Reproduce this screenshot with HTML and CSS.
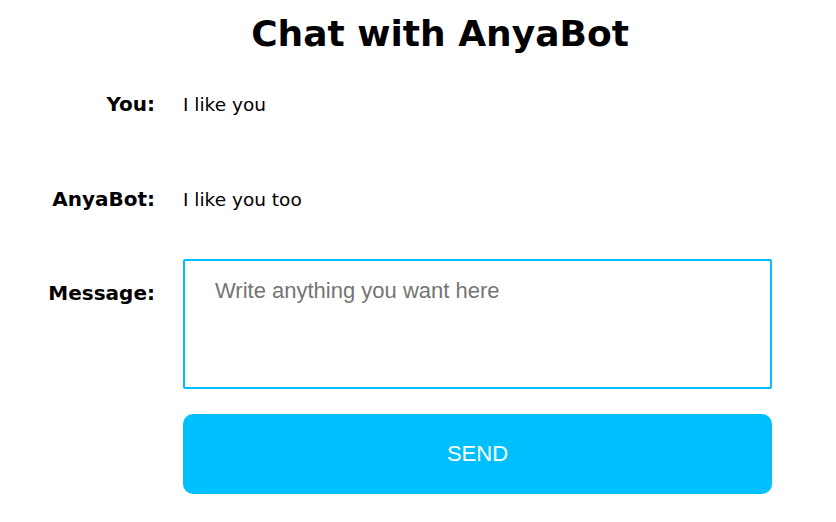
FILE: index.html
```html
<!DOCTYPE html>
<html lang="en">
<head>
<meta charset="utf-8">
<title>Chat with AnyaBot</title>
<link rel="stylesheet" href="styles.css">
</head>
<body>
<main class="page">
  <h1 class="title">Chat with AnyaBot</h1>
  <div class="row row-you">
    <span class="label">You:</span>
    <span class="text">I like you</span>
  </div>
  <div class="row row-bot">
    <span class="label">AnyaBot:</span>
    <span class="text">I like you too</span>
  </div>
  <div class="row row-msg">
    <label class="label label-msg" for="msg">Message:</label>
    <textarea id="msg" class="input" placeholder="Write anything you want here"></textarea>
  </div>
  <div class="row row-send">
    <span></span>
    <button class="send" type="button">SEND</button>
  </div>
</main>
</body>
</html>
```
FILE: styles.css
```css
html, body {
  margin: 0;
  padding: 0;
  background: #ffffff;
}

.page {
  width: 836px;
  font-family: "DejaVu Sans", sans-serif;
  color: #000;
}

.title {
  margin: 0 0 0 44px;
  padding-top: 12px;
  font-size: 36px;
  line-height: 44px;
  font-weight: bold;
  text-align: center;
}

.row {
  display: grid;
  grid-template-columns: 155px 589px;
  column-gap: 28px;
  align-items: baseline;
}

.label {
  font-size: 20px;
  line-height: 24px;
  font-weight: bold;
  text-align: right;
}

.text {
  font-size: 18.5px;
  line-height: 24px;
}

.row-you { margin-top: 36px; }
.row-bot { margin-top: 70px; }

.row-msg {
  margin-top: 47px;
  align-items: start;
}

.label-msg {
  padding-top: 22px;
}

.input {
  box-sizing: border-box;
  width: 589px;
  height: 130px;
  margin: 0;
  padding: 17px 30px;
  border: 2px solid #00bfff;
  border-radius: 2px;
  font-family: "Liberation Sans", Arial, sans-serif;
  font-size: 22px;
  resize: none;
  outline: none;
}

.input::placeholder {
  color: #757575;
}

.row-send {
  margin-top: 25px;
}

.send {
  width: 589px;
  height: 80px;
  border: none;
  border-radius: 10px;
  background: #00bfff;
  color: #ffffff;
  font-family: "Liberation Sans", Arial, sans-serif;
  font-size: 22px;
  cursor: pointer;
}
```
